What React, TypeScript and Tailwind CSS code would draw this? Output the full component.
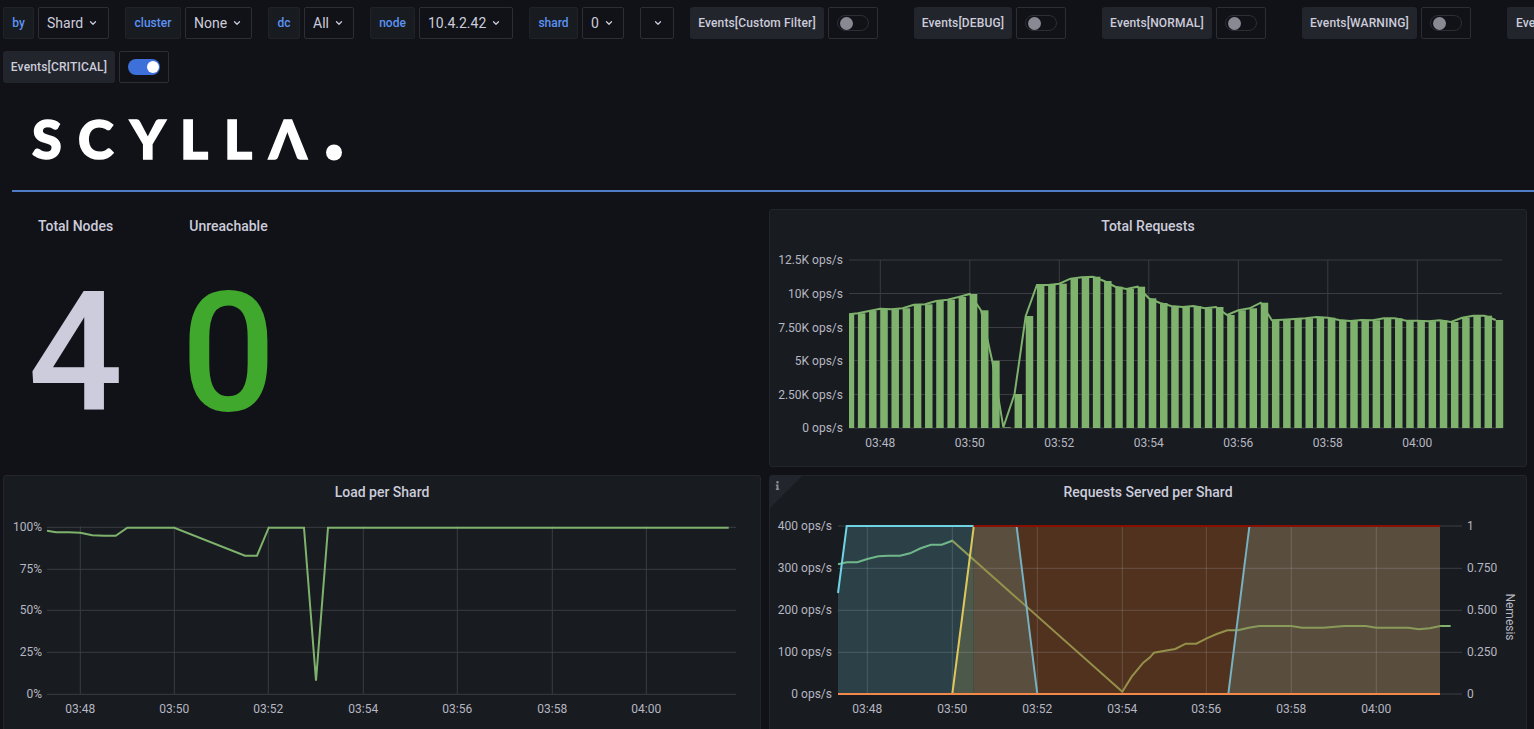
import { ChevronDown } from "lucide-react"
import { FaInfo } from "react-icons/fa"

const GRID = "#3b3d42"
const AXIS_TEXT = "fill-[#b6b7c2] text-xs"
const GREEN = "#7eb26d"

function VarLabel({ children, className }: { children: React.ReactNode; className: string }) {
  return (
    <div className={`h-8 shrink-0 flex items-center justify-center rounded-[2px] border border-[#202226] bg-[#181b1f] text-xs font-medium text-[#5c92f5] ${className}`}>
      {children}
    </div>
  )
}

function VarSelect({ value, className }: { value?: string; className: string }) {
  return (
    <div className={`h-8 shrink-0 flex items-center gap-[5px] rounded-[2px] border border-[#2c2e33] pl-2 text-sm text-[#ccccdc] ${className}`}>
      {value && <span>{value}</span>}
      <ChevronDown size={10} strokeWidth={3} />
    </div>
  )
}

function EventToggle({ label, on, className, labelClass }: { label: string; on?: boolean; className?: string; labelClass: string }) {
  return (
    <div className={`flex shrink-0 gap-1 ${className ?? ""}`}>
      <div className={`h-8 flex items-center justify-center rounded-[3px] bg-[#22252b] text-xs font-medium tracking-[0.15px] text-[#ccccdc] ${labelClass}`}>{label}</div>
      <div className="h-8 w-[50px] flex items-center justify-center rounded-[2px] border border-[#2c2e33]">
        {on ? (
          <div className="h-4 w-8 flex items-center justify-end rounded-full bg-[#3d71d9] pr-[1px]">
            <div className="size-[12px] rounded-full bg-white" />
          </div>
        ) : (
          <div className="h-4 w-8 flex items-center rounded-full border border-[#2c2e33] pl-[2px]">
            <div className="size-[13px] rounded-full bg-[#898994]" />
          </div>
        )}
      </div>
    </div>
  )
}

function Panel({ title, className, children }: { title?: string; className?: string; children: React.ReactNode }) {
  return (
    <div className={`relative h-[258px] flex flex-col rounded-[3px] border border-[#22252b] bg-[#181b1f] ${className ?? ""}`}>
      <div className="h-[33px] shrink-0 flex items-center justify-center pb-[1px] text-sm font-medium text-[#ccccdc]">{title}</div>
      {children}
    </div>
  )
}

function StatPanel({ title, value, className }: { title: string; value: string; className: string }) {
  return (
    <div className={`h-[258px] flex flex-col ${className}`}>
      <div className="h-[34px] shrink-0 flex items-center justify-center text-sm font-medium text-[#ccccdc]">{title}</div>
      <div className="flex-1 flex items-center justify-center pb-[3px] text-[167px] font-medium leading-none">{value}</div>
    </div>
  )
}

function Logo() {
  return (
    <svg width="330" height="60" viewBox="25 105 330 60" className="block">
      <text
        x="32 78 130 180 224 269"
        y="158.5"
        fontSize="54"
        fontWeight="900"
        fill="#ffffff"
        stroke="#ffffff"
        strokeWidth="1.5"
        fontFamily="Lato, sans-serif"
      >
        SCYLLΛ
      </text>
      <circle cx="334" cy="152.5" r="8" fill="#ffffff" />
    </svg>
  )
}

// pixel tops of the 15s bars, first one is clipped by the axis
const reqTops = [
  314.3, 313.3, 311, 308.7, 309.3, 308.3, 304.7, 304.3, 301, 299.7, 297, 294, 310.3, 360.7, 427.3, 394, 316, 285, 285,
  283.7, 278.7, 277.3, 276.7, 281, 286.7, 289, 286.7, 298.3, 303, 306, 307, 306, 308.3, 307, 315, 310.3, 308.3, 302.7,
  320.3, 319.7, 319, 318.3, 317, 317.7, 320, 321, 320, 320.3, 318.3, 318.3, 320.7, 320.7, 321.3, 320.3, 322, 317.7,
  315.7, 315.7, 320,
]

function TotalRequestsChart() {
  const ys = [260, 293.5, 327.5, 360.5, 394.5, 428]
  const labels = ["12.5K ops/s", "10K ops/s", "7.50K ops/s", "5K ops/s", "2.50K ops/s", "0 ops/s"]
  const xs = [880.3, 969.8, 1059.3, 1148.8, 1238.3, 1327.8, 1417.3]
  const times = ["03:48", "03:50", "03:52", "03:54", "03:56", "03:58", "04:00"]
  const barX = (i: number) => 846.7 + i * 11.19
  const line = reqTops.map((y, i) => `${Math.max(barX(i), 849)},${y}`).join(" ")
  return (
    <svg width="756" height="223" viewBox="770 243 756 223" className="block">
      {ys.map((y, i) => (
        <g key={y}>
          <line x1="849" x2="1502" y1={y} y2={y} stroke={GRID} />
          <text x="843" y={y + 4} textAnchor="end" className={AXIS_TEXT}>{labels[i]}</text>
        </g>
      ))}
      {xs.map((x, i) => (
        <g key={x}>
          <line x1={x} x2={x} y1="260" y2="428" stroke={GRID} />
          <text x={x} y="447" textAnchor="middle" className={AXIS_TEXT}>{times[i]}</text>
        </g>
      ))}
      {reqTops.map((y, i) => {
        const x = Math.max(barX(i), 849)
        return <rect key={i} x={x} y={y} width={barX(i) + 7.5 - x} height={428 - y} fill={GREEN} />
      })}
      <polyline points={line} fill="none" stroke={GREEN} strokeWidth="2" />
    </svg>
  )
}

const loadLine = [
  [47, 530.7], [56, 532.3], [68.3, 532.3], [80.3, 532.7], [92.3, 535.3], [104, 535.7], [115.7, 535.7], [127.3, 527.7],
  [174.3, 527.7], [245, 555.7], [257, 555.7], [268.7, 527.7], [304, 527.7], [316, 680.7], [328, 527.7], [728.7, 527.7],
]

function LoadChart() {
  const ys = [527.3, 569.3, 610.3, 652.3, 694.3]
  const labels = ["100%", "75%", "50%", "25%", "0%"]
  const xs = [80.3, 174.3, 268.3, 363.3, 457.3, 552.3, 646.3]
  const times = ["03:48", "03:50", "03:52", "03:54", "03:56", "03:58", "04:00"]
  return (
    <svg width="756" height="223" viewBox="4 509 756 223" className="block">
      {ys.map((y, i) => (
        <g key={y}>
          <line x1="47" x2="736" y1={y} y2={y} stroke={GRID} />
          <text x="42" y={y + 4} textAnchor="end" className={AXIS_TEXT}>{labels[i]}</text>
        </g>
      ))}
      {xs.map((x, i) => (
        <g key={x}>
          <line x1={x} x2={x} y1="526" y2="694" stroke={GRID} />
          <text x={x} y="713" textAnchor="middle" className={AXIS_TEXT}>{times[i]}</text>
        </g>
      ))}
      <polyline points={loadLine.map((p) => p.join(",")).join(" ")} fill="none" stroke={GREEN} strokeWidth="2" />
    </svg>
  )
}

const servedLine = [
  [838, 564.3], [846.7, 562.3], [857.3, 562.3], [867.3, 559], [878.3, 556.3], [888.3, 555.7], [900, 555.7], [910, 553.3],
  [920.7, 548.3], [931, 544.7], [941.7, 544.7], [952.3, 540.7], [1122.3, 691.7], [1131.7, 676.7], [1143.3, 662.7],
  [1150, 657.3], [1154, 652.7], [1165, 650.7], [1175.3, 649], [1185.7, 643.7], [1196.3, 643.7], [1206.7, 638.3],
  [1216.7, 634], [1227.3, 630.3], [1238, 630.3], [1248.7, 627.7], [1259.3, 626], [1291.3, 626], [1302, 627.7],
  [1323.3, 627.7], [1344.3, 626], [1365.7, 626], [1376.3, 627.7], [1408.3, 627.7], [1419, 629.3], [1429.7, 628.3],
  [1440.3, 626], [1450.7, 626],
]

function ServedChart() {
  const ys = [526, 568.3, 610.3, 652.3, 694]
  const left = ["400 ops/s", "300 ops/s", "200 ops/s", "100 ops/s", "0 ops/s"]
  const right = ["1", "0.750", "0.500", "0.250", "0"]
  const xs = [867.3, 952.3, 1037.3, 1122.3, 1206.3, 1291.3, 1376.3]
  const times = ["03:48", "03:50", "03:52", "03:54", "03:56", "03:58", "04:00"]
  return (
    <svg width="756" height="223" viewBox="770 509 756 223" className="block">
      <defs>
        <linearGradient id="servedStroke" gradientUnits="userSpaceOnUse" x1="838" x2="1451" y1="0" y2="0">
          <stop offset="0.186" stopColor="#70b789" />
          <stop offset="0.186" stopColor="#8e9a58" />
          <stop offset="0.222" stopColor="#8e9a58" />
          <stop offset="0.222" stopColor="#94904a" />
          <stop offset="0.638" stopColor="#94904a" />
          <stop offset="0.638" stopColor="#8a9a58" />
          <stop offset="0.983" stopColor="#8a9a58" />
          <stop offset="0.983" stopColor={GREEN} />
        </linearGradient>
      </defs>
      <polygon points="838,593 846.7,526 973.7,526 973.7,694 838,694" fill="#2b4047" />
      <polygon points="952.3,694 973.7,526 973.7,694" fill="#4c5849" />
      <polygon points="973.7,526 1016.7,526 1037.3,694 973.7,694" fill="#5a4e3e" />
      <polygon points="1016.7,526 1249.3,526 1228.3,694 1037.3,694" fill="#50321e" />
      <polygon points="1249.3,526 1440,526 1440,694 1228.3,694" fill="#594e3e" />
      {ys.map((y, i) => (
        <g key={y}>
          <line x1="838" x2="1462" y1={y} y2={y} stroke="#ccccdc" strokeOpacity="0.2" />
          <text x="832" y={y + 4} textAnchor="end" className={AXIS_TEXT}>{left[i]}</text>
          <text x="1467" y={y + 4} className={AXIS_TEXT}>{right[i]}</text>
        </g>
      ))}
      {xs.map((x, i) => (
        <g key={x}>
          <line x1={x} x2={x} y1="527" y2="694" stroke="#ccccdc" strokeOpacity="0.2" />
          <text x={x} y="713" textAnchor="middle" className={AXIS_TEXT}>{times[i]}</text>
        </g>
      ))}
      <polyline points={servedLine.map((p) => p.join(",")).join(" ")} fill="none" stroke="url(#servedStroke)" strokeWidth="2" />
      <polyline points="838,593 846.7,526 973.7,526" fill="none" stroke="#6fd3e4" strokeWidth="2" />
      <polyline points="1016.7,527 1037.3,694" fill="none" stroke="#76b2c2" strokeWidth="2" />
      <polyline points="1228.3,694 1249.3,527" fill="none" stroke="#76b2c2" strokeWidth="2" />
      <polyline points="952.3,694 973.7,527" fill="none" stroke="#e0c75c" strokeWidth="2" />
      <line x1="973.7" x2="1440" y1="526" y2="526" stroke="#890f02" strokeWidth="2" />
      <line x1="838" x2="1440" y1="694" y2="694" stroke="#f2894a" strokeWidth="2" />
      <text transform="translate(1506 617) rotate(90)" textAnchor="middle" className={AXIS_TEXT}>Nemesis</text>
    </svg>
  )
}

export default function App() {
  return (
    <div className="h-screen overflow-hidden bg-[#111217] pt-[7px] pl-[3px] font-[Roboto,sans-serif] text-[#ccccdc]">
      <div className="flex whitespace-nowrap">
        <VarLabel className="w-[31px] mr-1">by</VarLabel>
        <VarSelect value="Shard" className="w-[71px] mr-4" />
        <VarLabel className="w-[56px] mr-1">cluster</VarLabel>
        <VarSelect value="None" className="w-[67px] mr-4" />
        <VarLabel className="w-[32px] mr-1">dc</VarLabel>
        <VarSelect value="All" className="w-[50px] mr-4" />
        <VarLabel className="w-[45px] mr-1">node</VarLabel>
        <VarSelect value="10.4.2.42" className="w-[94px] mr-4" />
        <VarLabel className="w-[49px] mr-1">shard</VarLabel>
        <VarSelect value="0" className="w-[42px] mr-4" />
        <VarSelect className="w-[34px] mr-4 pl-[12px]" />
        <EventToggle label="Events[Custom Filter]" labelClass="w-[134px]" className="mr-9" />
        <EventToggle label="Events[DEBUG]" labelClass="w-[98px]" className="mr-9" />
        <EventToggle label="Events[NORMAL]" labelClass="w-[110px]" className="mr-9" />
        <EventToggle label="Events[WARNING]" labelClass="w-[115px]" className="mr-9" />
        <EventToggle label="Events[ERROR]" labelClass="w-[100px]" />
      </div>
      <div className="mt-3 flex">
        <EventToggle label="Events[CRITICAL]" labelClass="w-[112px]" on />
      </div>

      <div className="ml-[9px] h-[109px] border-b-2 border-[#4f7cc4] pt-[22px] pl-[13px]">
        <Logo />
      </div>

      <div className="mt-[17px] grid grid-cols-[758px_758px] gap-2">
        <div className="flex">
          <StatPanel title="Total Nodes" value="4" className="w-[145px] text-[#ccccdc]" />
          <StatPanel title="Unreachable" value="0" className="ml-1 w-[153px] text-[#40a82c]" />
        </div>
        <Panel title="Total Requests">
          <TotalRequestsChart />
        </Panel>
        <Panel title="Load per Shard">
          <LoadChart />
        </Panel>
        <Panel title="Requests Served per Shard">
          <div className="absolute top-0 left-0 size-0 border-t-[32px] border-r-[32px] border-t-[#22252b] border-r-transparent" />
          <FaInfo className="absolute top-[5px] left-[3px] text-[#8a8b94]" size={9} />
          <ServedChart />
        </Panel>
      </div>
    </div>
  )
}
